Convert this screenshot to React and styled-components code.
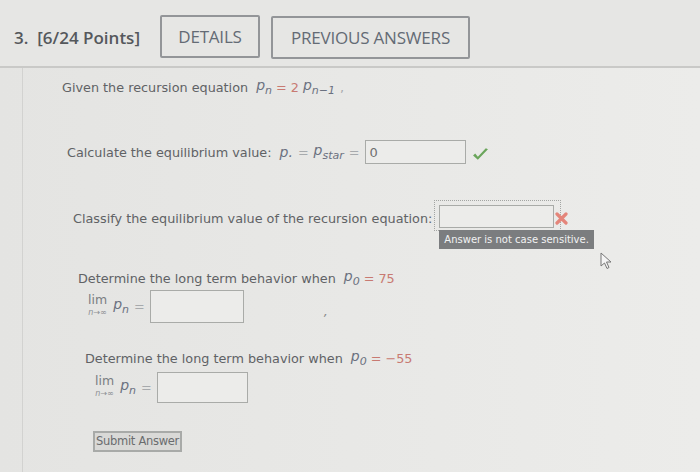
import React from "react";
import styled, { createGlobalStyle } from "styled-components";

const Global = createGlobalStyle`
  html, body { margin: 0; padding: 0; }
  body { width: 700px; height: 472px; overflow: hidden; background: #e4e4e2; font-family: "DejaVu Sans", Verdana, sans-serif; }
`;

const Page = styled.div`
  width: 700px;
  height: 472px;
  display: flex;
  flex-direction: column;
  background: linear-gradient(90deg, #e4e4e2 0%, #e8e8e6 50%, #ececea 100%);
`;

const Header = styled.div`
  height: 68px;
  display: flex;
  align-items: center;
  padding: 0 0 0 14px;
  border-bottom: 2px solid #c9c9c7;
  background: #e6e6e4;
  box-sizing: border-box;
`;

const Points = styled.div`
  font-family: "Open Sans", sans-serif;
  font-weight: 600;
  font-size: 17px;
  color: #55585c;
  margin-right: 20px;
  margin-top: 8px;
`;

const HeadButton = styled.div`
  height: 43px;
  box-sizing: border-box;
  border: 2px solid #939598;
  border-radius: 2px;
  display: flex;
  align-items: center;
  justify-content: center;
  width: ${(p) => p.$w}px;
  margin-right: 11px;
  margin-top: ${(p) => p.$mt || 0}px;
  font-family: "Open Sans", sans-serif;
  font-size: 17px;
  color: #646b75;
  letter-spacing: -0.2px;
`;

const Body = styled.div`
  flex: 1;
  margin-left: 22px;
  border-left: 1.5px solid #d2d2d0;
  position: relative;
  color: #606265;
  font-size: 12.8px;
`;

const Row = styled.div`
  display: flex;
  align-items: center;
  padding-left: ${(p) => p.$indent}px;
  margin-top: ${(p) => p.$mt}px;
  height: ${(p) => p.$h || 20}px;
  white-space: nowrap;
`;

const MathI = styled.span`
  font-style: italic;
  color: #6b7180;
  font-size: 14px;
  margin-left: ${(p) => p.$ml || 0}px;
`;

const Sub = styled.sub`
  font-size: 11px;
  font-style: italic;
  vertical-align: -4px;
`;

const Red = styled.span`
  color: #c87a72;
  margin: 0 4px;
`;

const Op = styled.span`
  color: #a7aaad;
  margin: 0 5px;
`;

const Input = styled.div`
  box-sizing: border-box;
  width: ${(p) => p.$w}px;
  height: ${(p) => p.$h}px;
  border: 1.5px solid #a9aba8;
  background: #ececea;
  font-size: 13px;
  color: #707070;
  padding-left: 4px;
  display: flex;
  align-items: center;
`;

const Check = styled.svg`
  margin-left: 6px;
  margin-top: 4px;
`;

const Dotted = styled.div`
  position: relative;
  margin-left: 2px;
  margin-top: -6px;
  padding: 4px 6px 2px 4px;
  border: 1.5px dotted #a3a5a3;
  display: flex;
`;

const XMark = styled.svg`
  position: absolute;
  right: -8px;
  top: 11px;
`;

const Tooltip = styled.div`
  position: absolute;
  left: 4px;
  top: 29px;
  background: #7b7d7f;
  color: #f2f2f2;
  font-size: 10px;
  padding: 4px 5px 4px;
  white-space: nowrap;
`;

const Lim = styled.div`
  display: flex;
  flex-direction: column;
  align-items: center;
  color: #7a7d82;
  font-size: 12.5px;
  line-height: 13px;
  margin-right: 6px;
`;

const LimSub = styled.span`
  font-size: 8px;
  font-style: italic;
  color: #8d9094;
`;

const Comma = styled.span`
  color: #8a8a8a;
  font-style: italic;
  margin-left: 80px;
  margin-top: 10px;
`;

const Submit = styled.div`
  box-sizing: border-box;
  width: 89px;
  height: 21px;
  border: 2px solid #a8aaa8;
  background: #d9d9d7;
  color: #6a6c6e;
  font-size: 11.5px;
  display: flex;
  align-items: center;
  justify-content: center;
  letter-spacing: -0.3px;
`;

const Cursor = styled.svg`
  position: absolute;
  left: 577px;
  top: 184px;
`;

export default function App() {
  return (
    <>
      <Global />
      <Page>
        <Header>
          <Points>3.&nbsp; [6/24 Points]</Points>
          <HeadButton $w={100} $mt={6}>DETAILS</HeadButton>
          <HeadButton $w={199} $mt={8}>PREVIOUS ANSWERS</HeadButton>
        </Header>
        <Body>
          <Row $indent={39} $mt={7} $h={24}>
            Given the recursion equation
            <MathI $ml={8}>p<Sub>n</Sub></MathI>
            <Red>= 2</Red>
            <MathI>p<Sub>n−1</Sub></MathI>
            <Op>,</Op>
          </Row>
          <Row $indent={44} $mt={41} $h={24}>
            Calculate the equilibrium value:
            <MathI $ml={8}>p.</MathI>
            <Op>=</Op>
            <MathI>p<Sub>star</Sub></MathI>
            <Op>=</Op>
            <Input $w={101} $h={24}>0</Input>
            <Check width="17" height="15" viewBox="0 0 16 14">
              <path d="M1 8 L5.5 12 L15 2 L13 1 L5.5 9 L3 6 Z" fill="#6aa55b" />
            </Check>
          </Row>
          <Row $indent={50} $mt={42} $h={24}>
            Classify the equilibrium value of the recursion equation:
            <Dotted>
              <Input $w={115} $h={23} />
              <XMark width="13" height="13" viewBox="0 0 13 13">
                <path d="M2 2 L11 11 M11 2 L2 11" stroke="#e4857a" strokeWidth="3.2" strokeLinecap="round" />
              </XMark>
              <Tooltip>Answer is not case sensitive.</Tooltip>
            </Dotted>
          </Row>
          <Row $indent={55} $mt={37} $h={22}>
            Determine the long term behavior when
            <MathI $ml={8}>p<Sub>0</Sub></MathI>
            <Red>= 75</Red>
          </Row>
          <Row $indent={65} $mt={0} $h={34}>
            <Lim>lim<LimSub>n→∞</LimSub></Lim>
            <MathI>p<Sub>n</Sub></MathI>
            <Op>=</Op>
            <Input $w={94} $h={33} />
            <Comma>,</Comma>
          </Row>
          <Row $indent={62} $mt={24} $h={22}>
            Determine the long term behavior when
            <MathI $ml={8}>p<Sub>0</Sub></MathI>
            <Red>= −55</Red>
          </Row>
          <Row $indent={72} $mt={2} $h={32}>
            <Lim>lim<LimSub>n→∞</LimSub></Lim>
            <MathI>p<Sub>n</Sub></MathI>
            <Op>=</Op>
            <Input $w={91} $h={31} />
          </Row>
          <Row $indent={70} $mt={27} $h={22}>
            <Submit>Submit Answer</Submit>
          </Row>
          <Cursor width="14" height="18" viewBox="0 0 14 18">
            <path d="M1 1 L1 14 L4.5 11 L7 16.5 L9 15.5 L6.5 10 L11 10 Z" fill="#f4f4f4" stroke="#777" strokeWidth="1" />
          </Cursor>
        </Body>
      </Page>
    </>
  );
}
